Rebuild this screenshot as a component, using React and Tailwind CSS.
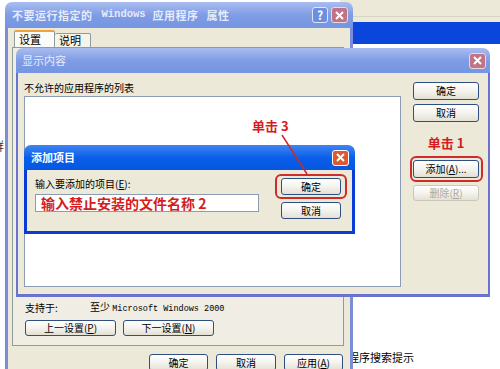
import React from "react";

const cjk = "font-['Noto_Sans_CJK_SC','Noto_Sans',sans-serif]";

function XpButton({ children, className = "", disabled }) {
  return (
    <div
      className={`flex items-center justify-center rounded-[3px] border bg-linear-to-b from-white via-[#f4f3ee] to-[#e3e0d3] text-[10px] leading-none ${
        disabled ? "border-[#cbc8bb] text-[#aca899]" : "border-[#2f4f82] text-black"
      } ${className}`}
    >
      {children}
    </div>
  );
}

function CloseBox({ active }) {
  return (
    <div
      className={`flex h-[16px] w-[17px] items-center justify-center rounded-[3px] border ${
        active ? "border-white bg-[#e1572f]" : "border-[#e6d9e3] bg-[#c27487]"
      }`}
    >
      <svg width="9" height="9" viewBox="0 0 9 9">
        <path d="M1 1 L8 8 M8 1 L1 8" stroke="white" strokeWidth="2" />
      </svg>
    </div>
  );
}

export default function App() {
  return (
    <div className={`relative h-[369px] w-[500px] overflow-hidden bg-white ${cjk}`}>
      {/* window behind, right side */}
      <div className="absolute left-[340px] top-0 flex w-[160px] flex-col">
        <div className="h-[16px] bg-[#ece9d8]" />
        <div className="h-[6px] border-t border-[#d8d4c4] bg-[#ece9d8]" />
        <div className="h-[22px] bg-[#0b46dc]" />
      </div>
      <div className="absolute left-[348px] top-[350px] text-[11px] leading-[14px] text-black">
        程序搜索提示
      </div>
      <div className="absolute left-[-8px] top-[139px] text-[12px] leading-[14px] text-[#333]">
        群
      </div>

      {/* outer properties window */}
      <div className="absolute left-[5px] top-[2px] flex w-[348px] flex-col">
        <div className="flex h-[26px] items-center rounded-t-[7px] bg-linear-to-b from-[#a9bdef] via-[#7f9ce5] to-[#7595e1] pl-[7px] pr-[5px]">
          <span className="flex items-center text-[11px] font-bold tracking-[0.5px] text-[#e4ebfb]">
            <span>不要运行指定的</span>
            <span className="ml-[9px] font-['Liberation_Mono',monospace] text-[10.5px] tracking-normal">Windows</span>
            <span className="ml-[7px]">应用程序</span>
            <span className="ml-[8px]">属性</span>
          </span>
          <div className="ml-auto flex gap-[3px]">
            <div className="flex h-[16px] w-[16px] items-center justify-center rounded-[3px] border border-[#dfe6f8] bg-[#6c8fe0] text-[12px] font-bold leading-none text-white">
              ?
            </div>
            <CloseBox />
          </div>
        </div>
        <div className="flex h-[345px] flex-col border-x-[3px] border-[#7b8dd8] bg-[#ece9d8] pl-[4px] pr-[6px]">
          <div className="flex h-[19px] items-end pl-[2px]">
            <div className="flex h-[17px] w-[41px] items-center rounded-t-[2px] border-x border-t-2 border-[#919b9c] border-t-[#f0a33a] bg-[#fbfbf9] pl-[4px] text-[11px] leading-none">
              设置
            </div>
            <div className="flex h-[14px] w-[36px] items-center rounded-t-[2px] border-r border-t border-[#919b9c] bg-[#f4f3ec] pl-[4px] text-[11px] leading-none">
              说明
            </div>
          </div>
          <div className="flex h-[299px] flex-col border border-[#919b9c] bg-[#efede4] pl-[12px]">
            <div className="h-[251px]" />
            <div className="mt-[3px] flex h-[12px] items-center text-[10px] leading-none">
              <span className="w-[65px]">支持于:</span>
              <span>
                至少 <span className="font-['Liberation_Mono',monospace] text-[8.5px]">Microsoft Windows 2000</span>
              </span>
            </div>
            <div className="mt-[6px] flex gap-[7px]">
              <XpButton className="h-[16px] w-[91px]">
                上一设置(<u>P</u>)
              </XpButton>
              <XpButton className="h-[16px] w-[91px]">
                下一设置(<u>N</u>)
              </XpButton>
            </div>
          </div>
          <div className="mt-[8px] flex justify-end gap-[8px] pr-[1px]">
            <XpButton className="h-[17px] w-[59px]">确定</XpButton>
            <XpButton className="h-[17px] w-[60px]">取消</XpButton>
            <XpButton className="h-[17px] w-[59px]">
              应用(<u>A</u>)
            </XpButton>
          </div>
        </div>
      </div>

      {/* 显示内容 dialog */}
      <div className="absolute left-[16px] top-[48px] flex w-[474px] flex-col">
        <div className="flex h-[25px] items-center rounded-t-[7px] bg-linear-to-b from-[#a9bdef] via-[#7f9ce5] to-[#7595e1] pl-[6px] pr-[4px]">
          <span className="text-[11px] text-[#e4ebfb]">显示内容</span>
          <div className="ml-auto">
            <CloseBox />
          </div>
        </div>
        <div className="flex h-[224px] border-x-[2px] border-b-[3px] border-[#6b71cf] bg-[#ece9d8] pl-[6px] pt-[8px]">
          <div className="flex w-[377px] flex-col">
            <div className="h-[14px] text-[10px] leading-[14px]">不允许的应用程序的列表</div>
            <div className="mt-[1px] h-[191px] border border-[#8c9cb5] bg-white" />
          </div>
          <div className="ml-[12px] mt-[1px] flex w-[66px] flex-col">
            <XpButton className="h-[18px]">确定</XpButton>
            <XpButton className="mt-[4px] h-[18px]">取消</XpButton>
            <div className="mt-[14px] h-[14px] text-center text-[13px] font-bold leading-[14px] text-[#d41d1d]">
              单击 1
            </div>
            <div className="relative mt-[10px]">
              <XpButton className="h-[18px]">
                添加(<u>A</u>)...
              </XpButton>
              <div className="absolute -bottom-[4px] -left-[3px] -right-[4px] -top-[4px] rounded-[6px] border-2 border-[#cf2b2b]" />
            </div>
            <XpButton disabled className="mt-[7px] h-[16px]">
              删除(<u>R</u>)
            </XpButton>
          </div>
        </div>
      </div>

      {/* 添加项目 dialog */}
      <div className="absolute left-[24px] top-[145px] flex w-[331px] flex-col">
        <div className="flex h-[25px] items-center rounded-t-[7px] bg-linear-to-b from-[#3d84f5] via-[#0a5fe8] to-[#0656e0] pl-[7px] pr-[6px]">
          <span className="text-[11px] font-bold text-white">添加项目</span>
          <div className="ml-auto">
            <CloseBox active />
          </div>
        </div>
        <div className="flex h-[64px] border-x-[3px] border-b-[3px] border-[#0b3bd6] bg-[#ece9d8] pl-[8px] pt-[7px]">
          <div className="flex w-[224px] flex-col">
            <div className="h-[13px] text-[10px] leading-[13px]">
              输入要添加的项目(<u>E</u>):
            </div>
            <div className="mt-[4px] flex h-[18px] items-center border border-[#8c9cb5] bg-white pl-[5px] text-[14px] font-bold leading-none text-[#d41d1d]">
              输入禁止安装的文件名称 2
            </div>
          </div>
          <div className="ml-[22px] flex w-[60px] flex-col pt-[1px]">
            <div className="relative">
              <XpButton className="h-[17px]">确定</XpButton>
              <div className="absolute -bottom-[4px] -left-[6px] -right-[6px] -top-[4px] rounded-[6px] border-2 border-[#cf2b2b]" />
            </div>
            <XpButton className="mt-[7px] h-[17px]">取消</XpButton>
          </div>
        </div>
      </div>

      {/* annotation 3 */}
      <div className="absolute left-[252px] top-[119px] text-[13px] font-bold leading-[14px] text-[#d41d1d]">
        单击 3
      </div>
      <svg className="absolute left-0 top-0" width="500" height="369">
        <path d="M282 135 L307 174" stroke="#c92a2a" strokeWidth="1.5" fill="none" />
      </svg>
    </div>
  );
}
